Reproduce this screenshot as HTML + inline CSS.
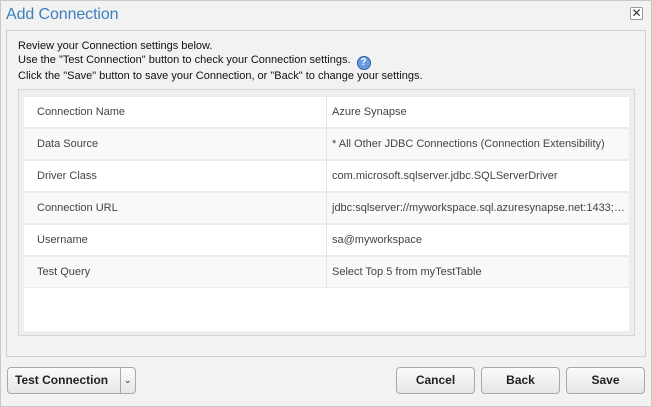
<!DOCTYPE html>
<html><head><style>
*{margin:0;padding:0;box-sizing:border-box}
body{width:652px;height:407px;background:#f2f2f2;font-family:"Liberation Sans",Arial,sans-serif;position:relative;overflow:hidden}
.outer{position:absolute;left:0;top:0;width:652px;height:407px;border:1px solid #c8c8c8;background:#f2f2f2}
.title{position:absolute;left:6px;top:6px;font-size:16px;color:#3d7ebf;letter-spacing:-0.1px}
.close{position:absolute;left:630px;top:7px;width:13px;height:13px;border:1px solid #999;border-radius:2px;background:#fff;font-size:12px;line-height:10px;text-align:center;color:#333}
.panel{position:absolute;left:6px;top:30px;width:640px;height:327px;border:1px solid #cfcfcf;background:#f2f2f2}
.txt{position:absolute;left:18px;top:40px;font-size:11px;line-height:13.5px;color:#111}
.help{display:inline-block;width:14px;height:14px;border-radius:50%;background:#6a9be0;border:1px solid #2f5fa8;color:#fff;font-size:10px;line-height:12px;text-align:center;font-weight:bold;vertical-align:-2px;margin-left:3px}
.frame{position:absolute;left:18px;top:89px;width:617px;height:247px;border:1px solid #d6d6d6;background:#eeeeee}
.inner{position:absolute;left:24px;top:96px;width:605px;height:235px;background:#fff}
.row{position:absolute;left:0;width:605px;height:30px;font-size:11px;color:#444;line-height:30px}
.row .a{position:absolute;left:13px}
.row .b{position:absolute;left:308px}
.row .d{position:absolute;left:302px;top:0;width:1px;height:30px;background:#e6e6e6}
.sep{position:absolute;left:0;width:605px;height:2px;background:#ebebeb}
.btn{position:absolute;top:367px;height:27px;border:1px solid #a8a8a8;border-radius:4px;background:linear-gradient(#fbfbfb,#e6e6e6);font-size:12px;font-weight:bold;color:#222;text-align:center;line-height:25px}
</style></head><body>
<div class="outer"></div>
<div class="title">Add Connection</div>
<div class="close">✕</div>
<div class="panel"></div>
<div class="txt">Review your Connection settings below.<br>Use the "Test Connection" button to check your Connection settings. <span class="help">?</span><br>Click the "Save" button to save your Connection, or "Back" to change your settings.</div>
<div class="frame"></div>
<div class="inner">
<div class="sep" style="top:0;height:1px"></div>
<div class="row" style="top:1px;background:#fff"><span class="a">Connection Name</span><span class="d"></span><span class="b">Azure Synapse</span></div>
<div class="sep" style="top:31px"></div>
<div class="row" style="top:33px;background:#f9f9f9"><span class="a">Data Source</span><span class="d"></span><span class="b">* All Other JDBC Connections (Connection Extensibility)</span></div>
<div class="sep" style="top:63px"></div>
<div class="row" style="top:65px;background:#fff"><span class="a">Driver Class</span><span class="d"></span><span class="b">com.microsoft.sqlserver.jdbc.SQLServerDriver</span></div>
<div class="sep" style="top:95px"></div>
<div class="row" style="top:97px;background:#f9f9f9"><span class="a">Connection URL</span><span class="d"></span><span class="b">jdbc:sqlserver://myworkspace.sql.azuresynapse.net:1433;…</span></div>
<div class="sep" style="top:127px"></div>
<div class="row" style="top:129px;background:#fff"><span class="a">Username</span><span class="d"></span><span class="b">sa@myworkspace</span></div>
<div class="sep" style="top:159px"></div>
<div class="row" style="top:161px;background:#f9f9f9"><span class="a">Test Query</span><span class="d"></span><span class="b">Select Top 5 from myTestTable</span></div>
<div class="sep" style="top:191px;height:1px"></div>
</div>
<div class="btn" style="left:7px;width:129px;text-align:left;padding-left:7px">Test Connection<span style="position:absolute;left:112px;top:0;width:1px;height:25px;background:#a8a8a8"></span><span style="position:absolute;left:116px;top:0;font-size:9px;font-weight:normal">&#8964;</span></div>
<div class="btn" style="left:396px;width:79px">Cancel</div>
<div class="btn" style="left:481px;width:79px">Back</div>
<div class="btn" style="left:566px;width:79px">Save</div>
</body></html>
